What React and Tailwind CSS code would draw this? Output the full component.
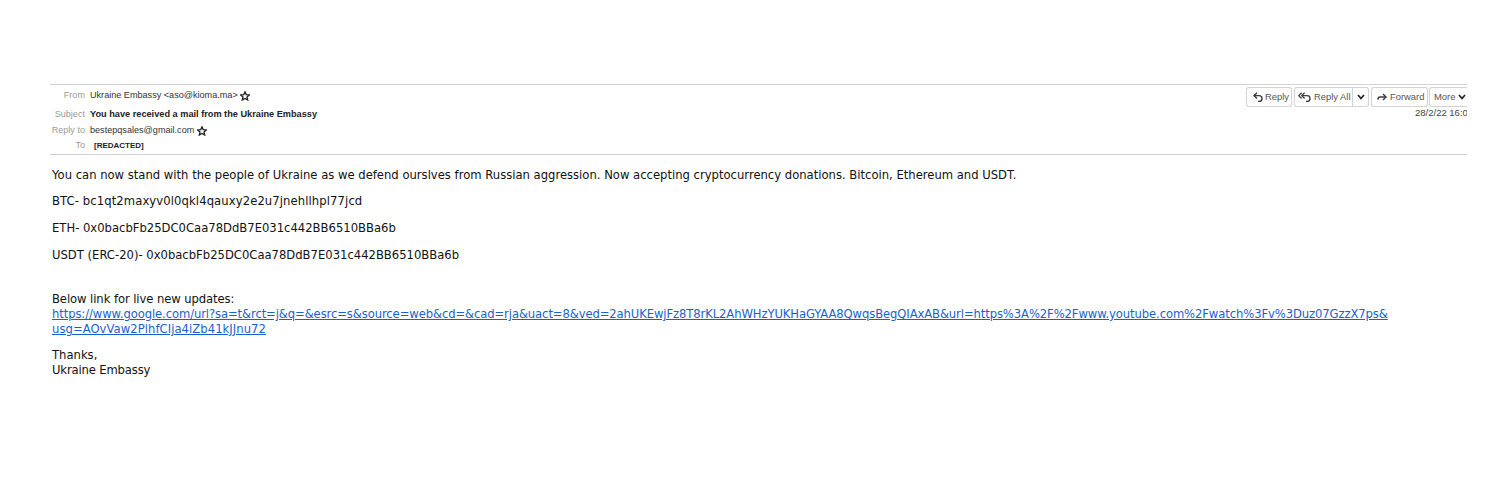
function ReplyIcon() {
  return (
    <svg width="10" height="10" viewBox="0 0 10 10" fill="none" stroke="#3a3a3a" strokeWidth="1.4" className="shrink-0">
      <path d="M4 0.7 L1 3.6 L4 6.5" />
      <path d="M1 3.6 H6 C8 3.6 9 5 9 6.4 C9 8 8 9.4 6 9.4 H5" />
    </svg>
  );
}
function ReplyAllIcon() {
  return (
    <svg width="13" height="10" viewBox="0 0 13 10" fill="none" stroke="#3a3a3a" strokeWidth="1.3" className="shrink-0">
      <path d="M3.6 0.7 L0.8 3.6 L3.6 6.5" />
      <path d="M6.6 0.7 L3.8 3.6 L6.6 6.5" />
      <path d="M3.8 3.6 H9 C11 3.6 12 5 12 6.4 C12 8 11 9.4 9 9.4 H8" />
    </svg>
  );
}
function ForwardIcon() {
  return (
    <svg width="10" height="9" viewBox="0 0 10 9" fill="none" stroke="#3a3a3a" strokeWidth="1.4" className="shrink-0">
      <path d="M6 1 L9 4 L6 7" />
      <path d="M9 4 H3 C1.8 4 1 5 0.8 6.6" />
    </svg>
  );
}
function Chevron() {
  return (
    <svg width="8" height="6" viewBox="0 0 8 6" fill="none" stroke="#222" strokeWidth="1.7" className="shrink-0">
      <path d="M1 1 L4 4.5 L7 1" />
    </svg>
  );
}
function Star({ className = "ml-[3px]" }) {
  return (
    <svg width="10" height="10" viewBox="0 0 10 10" fill="none" stroke="#222" strokeWidth="1.3" className={"shrink-0 " + className}>
      <path d="M5 0.8 L6.2 3.6 L9.3 3.9 L7 5.9 L7.7 9 L5 7.4 L2.3 9 L3 5.9 L0.7 3.9 L3.8 3.6 Z" />
    </svg>
  );
}
function Row({ label, className = "", children }) {
  return (
    <div className={"flex items-center " + className}>
      <span className="w-[35px] text-right text-[#9a9a9a] shrink-0">{label}</span>
      <div className="flex items-center ml-[5px]">{children}</div>
    </div>
  );
}
const btn = "h-[20px] flex items-center border border-[#d4d4d4] rounded-[3px] bg-white text-[#555] text-[9.4px] shadow-[0_0_1px_rgba(0,0,0,0.15)] whitespace-nowrap shrink-0";

export default function App() {
  return (
    <div className="w-[1500px] h-[500px] bg-white overflow-hidden pt-[84px] pl-[50px]">
      <div className="w-[1417px] overflow-hidden">
        <div className="h-[71px] border-y border-[#d2d2d2] flex justify-between font-['Liberation_Sans',sans-serif] text-[9.1px] text-[#333]">
          <div className="flex flex-col pt-[4px]">
            <Row label="From" className="h-[14px] mb-[5px]">
              <span>Ukraine Embassy &lt;aso@kioma.ma&gt;</span><Star className="ml-[2px]" />
            </Row>
            <Row label="Subject" className="h-[14px] mb-[2px]">
              <span className="font-bold text-[9.2px] text-[#222]">You have received a mail from the Ukraine Embassy</span>
            </Row>
            <Row label="Reply to" className="h-[14px] mb-[1px]">
              <span>bestepqsales@gmail.com</span><Star />
            </Row>
            <Row label="To" className="h-[13px]">
              <span className="font-bold text-[8px] text-[#222] ml-[4px]">[REDACTED]</span>
            </Row>
          </div>
          <div className="flex flex-col items-end pt-[2px] shrink-0">
            <div className="flex w-[221px] shrink-0 overflow-hidden">
              <div className={btn + " pl-[6px] gap-[2px] w-[46px]"}><ReplyIcon /><span>Reply</span></div>
              <div className={btn + " ml-[2px] w-[75px]"}>
                <div className="flex items-center gap-[3px] pl-[3px] w-[57px] shrink-0"><ReplyAllIcon /><span>Reply All</span></div>
                <div className="h-full border-l border-[#d4d4d4] flex items-center justify-center flex-1"><Chevron /></div>
              </div>
              <div className={btn + " ml-[2px] pl-[5px] gap-[3px] w-[57px]"}><ForwardIcon /><span>Forward</span></div>
              <div className={btn + " ml-[1px] pl-[4px] gap-[3px] w-[40px] text-[#444]"}><span>More</span><Chevron /></div>
            </div>
            <div className="w-[52px] overflow-hidden whitespace-nowrap text-[#444] text-[9.5px] leading-[10px] mt-[1px]">28/2/22 16:05</div>
          </div>
        </div>
        <div className="font-['DejaVu_Sans',sans-serif] text-[11.6px] leading-[15px] text-[#111] pl-[2px]">
          <p className="mt-[13px]">You can now stand with the people of Ukraine as we defend ourslves from Russian aggression. Now accepting cryptocurrency donations. Bitcoin, Ethereum and USDT.</p>
          <p className="mt-[11px] tracking-[0.1px]">BTC- bc1qt2maxyv0l0qkl4qauxy2e2u7jnehllhpl77jcd</p>
          <p className="mt-[12px]">ETH- 0x0bacbFb25DC0Caa78DdB7E031c442BB6510BBa6b</p>
          <p className="mt-[12px]">USDT (ERC-20)- 0x0bacbFb25DC0Caa78DdB7E031c442BB6510BBa6b</p>
          <p className="mt-[29px] tracking-[-0.08px]">Below link for live new updates:</p>
          <a className="block text-[#1a5fd0] underline whitespace-nowrap tracking-[-0.1px]">https://www.google.com/url?sa=t&amp;rct=j&amp;q=&amp;esrc=s&amp;source=web&amp;cd=&amp;cad=rja&amp;uact=8&amp;ved=2ahUKEwjFz8T8rKL2AhWHzYUKHaGYAA8QwqsBegQIAxAB&amp;url=https%3A%2F%2Fwww.youtube.com%2Fwatch%3Fv%3Duz07GzzX7ps&amp;</a>
          <a className="block text-[#1a5fd0] underline whitespace-nowrap tracking-[0.05px]">usg=AOvVaw2PlhfCIja4iZb41kJJnu72</a>
          <p className="mt-[11px]">Thanks,</p>
          <p className="tracking-[-0.15px]">Ukraine Embassy</p>
        </div>
      </div>
    </div>
  );
}
